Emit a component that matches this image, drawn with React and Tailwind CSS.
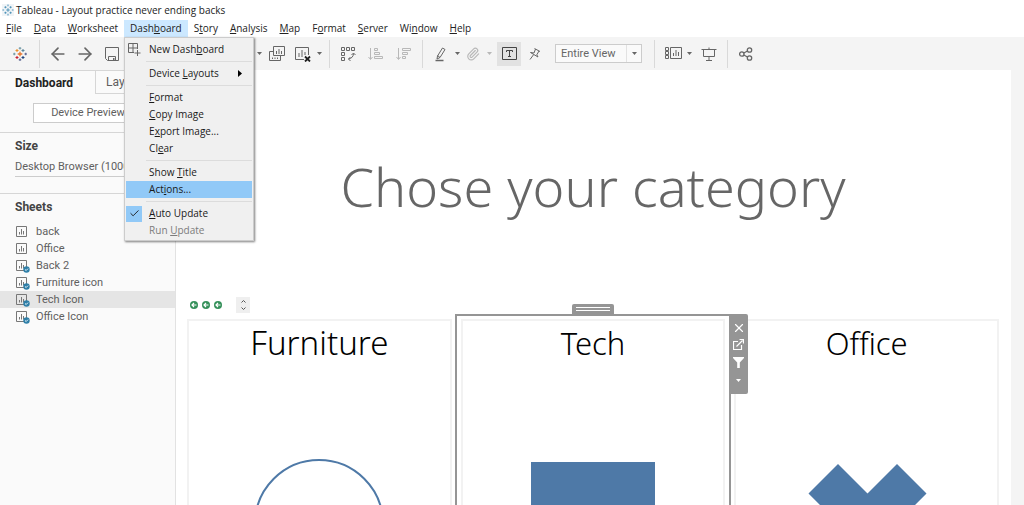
import { Fragment } from 'react'
import { ArrowLeft, ArrowRight, Check, Paperclip, X } from 'lucide-react'

// the * marks the letter that follows as the access key
const MENUS = ['*File', '*Data', '*Worksheet', 'Dash*board', 'S*tory', '*Analysis', '*Map', 'F*ormat', '*Server', 'Wi*ndow', '*Help']

const DASHBOARD_MENU = [
  [{ label: 'New Dash*board', icon: 'new' }],
  [{ label: 'Device *Layouts', submenu: true }],
  [{ label: '*Format' }, { label: '*Copy Image' }, { label: 'E*xport Image...' }, { label: 'Cl*ear' }],
  [{ label: 'Show *Title' }, { label: 'Act*ions...', active: true }],
  [{ label: '*Auto Update', icon: 'check' }, { label: 'Run *Update', disabled: true }],
]

const SHEETS = [
  { name: 'back' },
  { name: 'Office' },
  { name: 'Back 2', used: true },
  { name: 'Furniture icon', used: true },
  { name: 'Tech Icon', used: true, selected: true },
  { name: 'Office Icon', used: true },
]

function AccessLabel({ text }) {
  const [before, rest] = text.split('*')
  return (
    <span>
      {before}
      <u className="underline-offset-1">{rest[0]}</u>
      {rest.slice(1)}
    </span>
  )
}

function TableauMark({ size }) {
  return (
    <svg width={size} height={size} viewBox="0 0 14 14" fill="none" strokeWidth="1.1" aria-hidden>
      <path d="M7 4.7v4.6M4.7 7h4.6" stroke="#e8762c" strokeWidth="1.3" />
      <path d="M4 2v3M2.5 3.5h3" stroke="#eb912c" />
      <path d="M10 2v3M8.5 3.5h3" stroke="#59879b" />
      <path d="M4 9v3M2.5 10.5h3" stroke="#c72035" />
      <path d="M10 9v3M8.5 10.5h3" stroke="#1f447e" />
      <path d="M7 0v2.6M5.7 1.3h2.6" stroke="#7199a6" />
      <path d="M7 11.4V14M5.7 12.7h2.6" stroke="#5b6591" />
      <path d="M1.3 5.7v2.6M0 7h2.6" stroke="#7199a6" />
      <path d="M12.7 5.7v2.6M11.4 7H14" stroke="#5b6591" />
    </svg>
  )
}

function WindowMark() {
  return (
    <svg width="12" height="12" viewBox="0 0 14 14" fill="none" stroke="#4f93b8" strokeWidth="1.2" className="bg-[#f0f4f7]" aria-hidden>
      <path d="M7 5v4M5 7h4M4 2.500v2.500M2.800 3.700h2.500M10 2.500v2.500M8.800 3.700h2.500M4 9v2.500M2.800 10.300h2.500M10 9v2.500M8.800 10.300h2.500" />
      <path d="M7 .5v2M7 11.500v2M.5 7h2M11.500 7h2" />
    </svg>
  )
}

function Icon({ width = 16, height = 16, children }) {
  return (
    <svg width={width} height={height} viewBox={`0 0 ${width} ${height}`} fill="none" stroke="currentColor" aria-hidden>
      {children}
    </svg>
  )
}

function Caret() {
  return (
    <svg width="5" height="3" viewBox="0 0 5 3" fill="currentColor" aria-hidden>
      <path d="M0 0h5L2.5 3z" />
    </svg>
  )
}

function Tool({ label, className = 'w-6', children }) {
  return (
    <button type="button" aria-label={label} className={`flex h-6 shrink-0 items-center justify-center ${className}`}>
      {children}
    </button>
  )
}

function Divider({ className = 'mx-1.5' }) {
  return <div className={`h-7 w-px shrink-0 bg-[#d9d9d9] ${className}`} />
}

function DashboardMenu() {
  return (
    <div
      role="menu"
      className="absolute left-0 top-full z-20 w-[130px] border border-[#cccccc] bg-[#f0f0f0] px-px pb-px pt-[3px] text-[#1a1a1a] shadow-[1px_1px_2px_rgba(0,0,0,0.5)]"
    >
      {DASHBOARD_MENU.map((group, i) => (
        <Fragment key={i}>
          {i > 0 && <div className="my-[3px] ml-5 h-px bg-[#dcdcdc]" />}
          {group.map((item) => (
            <button
              key={item.label}
              type="button"
              role="menuitem"
              disabled={item.disabled}
              className={`flex h-[17px] w-full items-center whitespace-nowrap text-left ${item.active ? 'bg-[#91c9f7]' : ''} ${item.disabled ? 'text-[#7c7c7c]' : ''}`}
            >
              <span className={`mr-[7px] flex h-4 w-4 shrink-0 items-center justify-center ${item.icon === 'check' ? 'bg-[#91c9f7]' : ''}`}>
                {item.icon === 'check' && <Check size={11} strokeWidth={2} />}
                {item.icon === 'new' && (
                  <Icon width={13} height={13}>
                    <path d="M6 9.5H.5v-9h9V6M.5 5h9M5 .5v9M9.5 7v6M6.5 10h6" stroke="#666666" />
                  </Icon>
                )}
              </span>
              <AccessLabel text={item.label} />
              {item.submenu && (
                <svg width="4" height="7" viewBox="0 0 4 7" className="ml-auto mr-2.5" aria-hidden>
                  <path d="M0 0l4 3.500L0 7z" fill="#000000" />
                </svg>
              )}
            </button>
          ))}
        </Fragment>
      ))}
    </div>
  )
}

function Toolbar() {
  return (
    <div className="flex h-[33px] shrink-0 items-center overflow-hidden bg-[#f4f4f4] text-[#666666]">
      <Tool label="Start page" className="w-[39px]">
        <TableauMark size={14} />
      </Tool>
      <Divider className="mr-1" />
      <Tool label="Undo" className="w-[27px]">
        <ArrowLeft size={20} strokeWidth={2} />
      </Tool>
      <Tool label="Redo" className="w-[27px]">
        <ArrowRight size={20} strokeWidth={2} />
      </Tool>
      <Tool label="Save" className="w-[27px]">
        <Icon width={14} height={14}>
          <path d="M.5.5h13v13H2.500l-2-2zM3.500 13.500v-4h7v4" />
          <path d="M8 11h1.500v2H8z" fill="currentColor" stroke="none" />
        </Icon>
      </Tool>
      <Tool label="New worksheet" className="ml-[130px] w-2">
        <Caret />
      </Tool>
      <Tool label="Duplicate" className="w-7">
        <Icon>
          <path d="M4.500.5h11v9h-11zM4 5.500H.5v9h11V10M7.500 8V5M10 8V3M12.500 8V5M3.500 13v-1.500M6 13v-1.500M8.500 13v-1.500" />
        </Icon>
      </Tool>
      <Tool label="Clear sheet">
        <Icon>
          <path d="M9 13.500H.5v-12h13V9M4 11V7M7 11V4M10 9V6" />
          <path d="M10 10.500l5 5M15 10.500l-5 5" stroke="#222222" strokeWidth="1.800" />
        </Icon>
      </Tool>
      <Tool label="Clear options" className="w-2">
        <Caret />
      </Tool>
      <Divider />
      <Tool label="Swap rows and columns">
        <Icon>
          <path d="M1.500 1.500h3v3h-3zM6.500 1.500h3v3h-3zM11.500 1.500h3v3h-3zM1.500 6.500h3v3h-3zM1.500 11.500h3v3h-3z" />
          <path d="M13.500 7.500c0 3-2 5-5 5.500M11.500 9l2-2 2 2M10.500 11l-2 2 2 2" />
        </Icon>
      </Tool>
      <Tool label="Sort ascending" className="w-8 text-[#b8b8b8]">
        <Icon>
          <path d="M2.500 2v11M.5 11l2 2.500 2-2.500M6.500 2.500h3v2h-3zM6.500 6.500h5v2h-5zM6.500 10.500h8v2h-8z" />
        </Icon>
      </Tool>
      <Tool label="Sort descending" className="w-6 text-[#b8b8b8]">
        <Icon>
          <path d="M2.500 2v11M.5 11l2 2.500 2-2.500M6.500 2.500h8v2h-8zM6.500 6.500h5v2h-5zM6.500 10.500h3v2h-3z" />
        </Icon>
      </Tool>
      <Divider />
      <Tool label="Highlight">
        <Icon>
          <path d="M9.500 2l2.500 1.500-5 8L4 13l.5-3zM4.500 9.500L7 11.500" />
          <path d="M2.500 14.500h8" strokeWidth="1.500" />
        </Icon>
      </Tool>
      <Tool label="Highlight options" className="w-2">
        <Caret />
      </Tool>
      <Tool label="Group members" className="w-6 text-[#b8b8b8]">
        <Paperclip size={14} strokeWidth={2} />
      </Tool>
      <Tool label="Group options" className="w-2 text-[#b8b8b8]">
        <Caret />
      </Tool>
      <Tool label="Show mark labels" className="ml-1 w-6 bg-[#e2e2e2]">
        <Icon width={15} height={13}>
          <path d="M.5.5h14v12H.5z" stroke="#444444" />
          <path d="M4.500 5V3.500h6V5M7.500 3.500v6M6 9.500h3" stroke="#444444" />
        </Icon>
      </Tool>
      <Tool label="Fix axes" className="w-7">
        <Icon width={12} height={14}>
          <path d="M5.500 1.500l5.500 3M6.500 2L5 6M10 4L7.800 7.800M1.500 5.500l7.500 4.500M1.500 5.500L5 6M7.800 7.800L9 10M4.500 7.800L1 12.500" />
        </Icon>
      </Tool>
      <div className="relative ml-1.5 h-[19px] w-[87px] shrink-0 border border-[#cccccc] bg-[#fafafa]">
        <select aria-label="Fit" className="block h-full w-full appearance-none bg-transparent pl-[5px] text-[11px] leading-4">
          <option>Entire View</option>
        </select>
        <span className="pointer-events-none absolute inset-y-0 right-0 flex w-[15px] items-center justify-center border-l border-[#e2e2e2]">
          <Caret />
        </span>
      </div>
      <Divider className="ml-3 mr-1.5" />
      <Tool label="Show/hide cards">
        <Icon width={17} height={13}>
          <path d="M.5.5h3v3h-3zM.5 4.500h3v3h-3zM.5 8.500h3v3h-3zM5.500.5h11v11h-11zM8.500 9V6M11 9V3M13.500 9V5" />
        </Icon>
      </Tool>
      <Tool label="Card options" className="w-2">
        <Caret />
      </Tool>
      <Tool label="Presentation mode" className="w-8">
        <Icon>
          <path d="M.5 3.500h15M2.500 3.500v7h11v-7M8 1.500v2M8 10.500v4M5 14.500h6" />
        </Icon>
      </Tool>
      <Divider className="ml-0.5 mr-1.5" />
      <Tool label="Share">
        <Icon width={14} height={14}>
          <circle cx="2.800" cy="7" r="2.200" strokeWidth="1.300" />
          <circle cx="10.500" cy="3" r="2.200" strokeWidth="1.300" />
          <circle cx="10.500" cy="11" r="2.200" strokeWidth="1.300" />
          <path d="M4.800 6l3.700-2M4.800 8l3.700 2" strokeWidth="1.300" />
        </Icon>
      </Tool>
    </div>
  )
}

function SheetIcon({ used }) {
  return (
    <svg width="14" height="14" viewBox="0 0 14 14" fill="none" aria-hidden>
      <path d="M.5 1.500h10v10H.5z" stroke="#777777" />
      <path d="M3.500 9.500V7M5.500 9.500V4M7.500 9.500V6" stroke="#777777" />
      {used && (
        <>
          <circle cx="10.500" cy="10.500" r="3.200" fill="#2e7fa8" />
          <path d="M9 10.500l1.200 1L12 9.600" stroke="#ffffff" strokeWidth=".9" />
        </>
      )}
    </svg>
  )
}

function Sidebar() {
  return (
    <aside className="w-44 shrink-0 overflow-hidden border-r border-[#e2e2e2] bg-[#fafafa] text-[11px] leading-4 text-[#5f5f5f]">
      <div className="flex h-6 border-t border-[#d6d6d6]">
        <button type="button" className="w-[95px] pl-[15px] text-left text-[12px] font-bold text-[#222222]">
          Dashboard
        </button>
        <button type="button" className="flex-1 border-b border-l border-[#d6d6d6] pl-2.5 text-left text-[12px]">
          Layout
        </button>
      </div>
      <div className="border-b border-[#d6d6d6] py-[9px] pl-[33px] pr-8">
        <button type="button" className="h-5 w-full whitespace-nowrap border border-[#cccccc] bg-white">
          Device Preview
        </button>
      </div>
      <div className="h-[61px] border-b border-[#d6d6d6] pl-[15px] pr-3 pt-[5px]">
        <h2 className="text-[12px] font-bold leading-4 text-[#444444]">Size</h2>
        <button type="button" className="mt-1 h-[19px] w-full overflow-hidden whitespace-nowrap border-b border-[#cccccc] text-left">
          Desktop Browser (1000
        </button>
      </div>
      <h2 className="pl-[15px] pt-[5px] text-[12px] font-bold leading-4 text-[#444444]">Sheets</h2>
      <ul className="mt-2">
        {SHEETS.map((sheet) => (
          <li key={sheet.name} className={`flex h-[17px] items-center gap-1.5 pl-4 ${sheet.selected ? 'bg-[#e5e5e5]' : ''}`}>
            <SheetIcon used={sheet.used} />
            {sheet.name}
          </li>
        ))}
      </ul>
    </aside>
  )
}

function SelectionFrame() {
  return (
    <div className="absolute -inset-x-2 -bottom-2 -top-[7px] z-10 border-2 border-[#959595]">
      <div className="absolute -top-3 left-1/2 flex h-2.5 w-[42px] -translate-x-1/2 flex-col justify-center gap-0.5 rounded-t-xs bg-[#959595] px-1">
        <span className="h-px bg-white" />
        <span className="h-px bg-white" />
      </div>
      <div className="absolute -top-0.5 left-full flex h-20 w-[19px] flex-col items-center rounded-r-xs bg-[#959595] pt-1.5 text-white">
        <button type="button" aria-label="Remove" className="flex h-4 items-center">
          <X size={14} strokeWidth={2} />
        </button>
        <button type="button" aria-label="Go to sheet" className="flex h-4 items-center">
          <Icon width={11} height={11}>
            <path d="M5 2.500H.5v8h8V6M3.500 7.500l6-6M6.500.5h4v4" strokeWidth="1.200" />
          </Icon>
        </button>
        <button type="button" aria-label="Use as filter" className="flex h-5 items-center">
          <svg width="11" height="11" viewBox="0 0 11 11" fill="currentColor" aria-hidden>
            <path d="M0 0h11v1L6.800 5.500V11H4.200V5.500L0 1z" />
          </svg>
        </button>
        <button type="button" aria-label="More options" className="flex h-4 items-center">
          <Caret />
        </button>
      </div>
    </div>
  )
}

function SheetCard({ title, titleSize = 'text-[31px]', selected, children }) {
  return (
    <section className="relative flex h-[320px] flex-col items-center border-2 border-[#f2f2f2] pt-px">
      <h2 className={`font-['Noto_Sans',sans-serif] font-light leading-[42px] text-black ${titleSize}`}>{title}</h2>
      <svg width="130" height="130" viewBox="0 0 130 130" className="mt-[94px]" aria-hidden>
        {children}
      </svg>
      {selected && <SelectionFrame />}
    </section>
  )
}

function Canvas() {
  return (
    <main className="mr-[13px] min-w-0 flex-1 overflow-hidden bg-white pl-[11px] pr-3">
      <h1 className="flex h-[223px] items-center justify-center whitespace-nowrap pt-2 font-['Noto_Sans',sans-serif] text-[54px] font-light leading-none text-[#666666]">
        Chose your category
      </h1>
      <div className="mb-0.5 flex h-6 items-center gap-1 pl-[3px]">
        {[0, 1, 2].map((n) => (
          <svg key={n} width="8" height="8" viewBox="0 0 8 8" aria-hidden>
            <circle cx="4" cy="4" r="4" fill="#35905a" />
            <path d="M6.500 4H2M4 2L2 4l2 2" fill="none" stroke="#ffffff" strokeWidth="1.200" />
          </svg>
        ))}
        <div className="ml-2.5 flex h-4 w-3.5 flex-col items-center justify-between bg-[#efefef] py-[3px] text-[#555555]">
          <button type="button" aria-label="Previous" className="flex">
            <Icon width={5} height={3}>
              <path d="M.5 2.500l2-2 2 2" />
            </Icon>
          </button>
          <button type="button" aria-label="Next" className="flex">
            <Icon width={5} height={3}>
              <path d="M.5.5l2 2 2-2" />
            </Icon>
          </button>
        </div>
      </div>
      <div className="grid grid-cols-3 gap-[9px]">
        <SheetCard title="Furniture" titleSize="text-[33px]">
          <circle cx="65" cy="66" r="64" fill="none" stroke="#4e79a7" strokeWidth="2" />
        </SheetCard>
        <SheetCard title="Tech" selected>
          <rect x="3" y="4" width="124" height="124" fill="#4e79a7" />
        </SheetCard>
        <SheetCard title="Office">
          <path
            d="M36 6l29.500 29.500L95 6l29.500 29.500L95 65l29.500 29.500L95 124 65.500 94.500 36 124 6.500 94.500 36 65 6.500 35.500z"
            fill="#4e79a7"
          />
        </SheetCard>
      </div>
    </main>
  )
}

export default function App() {
  return (
    <div className="flex h-screen flex-col overflow-hidden bg-[#f4f4f4] font-['Roboto',sans-serif]">
      <header className="shrink-0 bg-white font-['Open_Sans',sans-serif] text-[10px] text-[#222222]">
        <div className="flex h-5 items-center gap-0.5 pl-0.5">
          <WindowMark />
          Tableau - Layout practice never ending backs
        </div>
        <nav className="flex h-[17px]">
          {MENUS.map((menu) => {
            const open = menu === 'Dash*board'
            return (
              <div key={menu} className="relative">
                <button type="button" className={`h-full px-1.5 ${open ? 'bg-[#cce8ff]' : ''}`}>
                  <AccessLabel text={menu} />
                </button>
                {open && <DashboardMenu />}
              </div>
            )
          })}
        </nav>
      </header>
      <Toolbar />
      <div className="flex min-h-0 flex-1">
        <Sidebar />
        <Canvas />
      </div>
    </div>
  )
}
